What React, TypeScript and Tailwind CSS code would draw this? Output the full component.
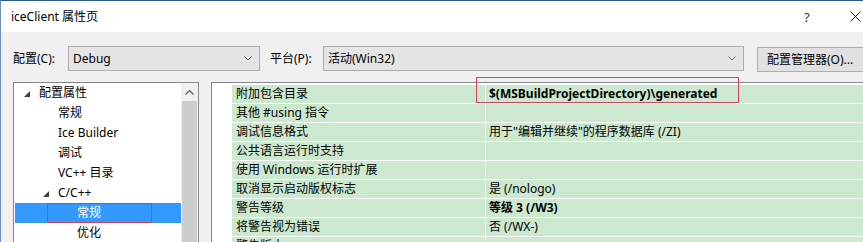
import type { ReactNode } from 'react';

type TreeItem = { label: string; level: 0 | 1 | 2; expanded?: boolean; selected?: boolean };

const treeItems: TreeItem[] = [
  { label: '配置属性', level: 0, expanded: true },
  { label: '常规', level: 1 },
  { label: 'Ice Builder', level: 1 },
  { label: '调试', level: 1 },
  { label: 'VC++ 目录', level: 1 },
  { label: 'C/C++', level: 1, expanded: true },
  { label: '常规', level: 2, selected: true },
  { label: '优化', level: 2 },
];

const indent = { 0: 'pl-[9px]', 1: 'pl-[28px]', 2: 'pl-[47px]' };

const props: { name: string; value?: string; bold?: boolean }[] = [
  { name: '附加包含目录', value: '$(MSBuildProjectDirectory)\\generated', bold: true },
  { name: '其他 #using 指令' },
  { name: '调试信息格式', value: '用于"编辑并继续"的程序数据库 (/ZI)' },
  { name: '公共语言运行时支持' },
  { name: '使用 Windows 运行时扩展' },
  { name: '取消显示启动版权标志', value: '是 (/nologo)' },
  { name: '警告等级', value: '等级 3 (/W3)', bold: true },
  { name: '将警告视为错误', value: '否 (/WX-)' },
  { name: '警告版本' },
];

function Chevron() {
  return (
    <svg width="8" height="5" viewBox="0 0 8 5" className="shrink-0">
      <path d="M0.5 0.5 L4 4 L7.5 0.5" fill="none" stroke="#606060" strokeWidth="1" />
    </svg>
  );
}

function Combo({ width, children }: { width: string; children: ReactNode }) {
  return (
    <div className={`${width} h-[25px] shrink-0 flex items-center justify-between border border-[#acacac] bg-[#e5e5e5] pl-[4px] pr-[7px]`}>
      <span>{children}</span>
      <Chevron />
    </div>
  );
}

export default function App() {
  return (
    <div className="relative w-[863px] h-[242px] overflow-hidden bg-[#f0f0f0] border-t border-t-[#2a5b92] border-l border-l-[#6d90bb] text-[12px] leading-[16px] text-black font-['Noto_Sans','Noto_Sans_CJK_SC',sans-serif]">
      {/* title bar */}
      <div className="h-[31px] bg-white flex items-center pl-[10px]">
        <span className="flex-1">iceClient 属性页</span>
        <span className="w-[10px] text-[13px] text-[#333]">?</span>
        <svg width="11" height="11" viewBox="0 0 11 11" className="ml-[36px] mr-[2px]">
          <path d="M0.5 0.5 L10.5 10.5 M10.5 0.5 L0.5 10.5" stroke="#222" strokeWidth="1" />
        </svg>
      </div>

      {/* config row */}
      <div className="flex items-start pt-[14px] pl-[12px]">
        <span className="w-[55px] h-[25px] shrink-0 flex items-center">配置(C):</span>
        <Combo width="w-[192px]">Debug</Combo>
        <span className="ml-[10px] w-[53px] h-[25px] shrink-0 flex items-center">平台(P):</span>
        <Combo width="w-[421px]">活动(Win32)</Combo>
        <button className="ml-[13px] mt-[1px] w-[112px] h-[25px] shrink-0 border border-[#adadad] bg-[#e1e1e1] text-left pl-[9px] whitespace-nowrap">
          配置管理器(O)...
        </button>
      </div>

      {/* panels */}
      <div className="flex mt-[10px] pl-[12px]">
        <div className="w-[186px] h-[200px] shrink-0 border border-[#828790] bg-white flex">
          <div className="flex-1 pl-[1px]">
            {treeItems.map((item, i) => (
              <div
                key={i}
                className={`h-[20px] flex items-center ${indent[item.level]} ${item.selected ? 'bg-[#3399ff] text-white' : ''}`}
              >
                <span className="w-[15px] h-[20px] flex items-center">
                  {item.expanded && (
                    <svg width="6" height="6" viewBox="0 0 6 6" className="mt-[1px]">
                      <polygon points="6,0 6,6 0,6" fill="#404040" />
                    </svg>
                  )}
                </span>
                <span>{item.label}</span>
              </div>
            ))}
          </div>
          <div className="w-[17px] bg-[#f0f0f0] flex flex-col items-center">
            <div className="h-[18px] flex items-center justify-center">
              <svg width="9" height="5" viewBox="0 0 9 5">
                <path d="M0.5 4.5 L4.5 0.5 L8.5 4.5" fill="none" stroke="#606060" strokeWidth="1.3" />
              </svg>
            </div>
            <div className="w-[15px] flex-1 bg-[#cdcdcd]" />
          </div>
        </div>

        <div className="ml-[12px] flex-1 mr-[-4px] h-[200px] border border-[#828790] bg-white pt-[2px] pl-[20px]">
          {props.map((p) => (
            <div key={p.name} className="h-[19px] flex border-b border-white bg-[#cce8cf]">
              <div className="w-[253px] pl-[4px] flex items-center">{p.name}</div>
              <div className={`flex-1 border-l border-white pl-[3px] flex items-center ${p.bold ? 'font-bold' : ''}`}>
                {p.value}
              </div>
            </div>
          ))}
        </div>
      </div>

      {/* red annotation boxes */}
      <div className="absolute left-[475px] top-[76px] w-[263px] h-[26px] border border-[#d0435a]" />
      <div className="absolute left-[46px] top-[202px] w-[105px] h-[20px] border border-[#d0435a]" />
    </div>
  );
}
